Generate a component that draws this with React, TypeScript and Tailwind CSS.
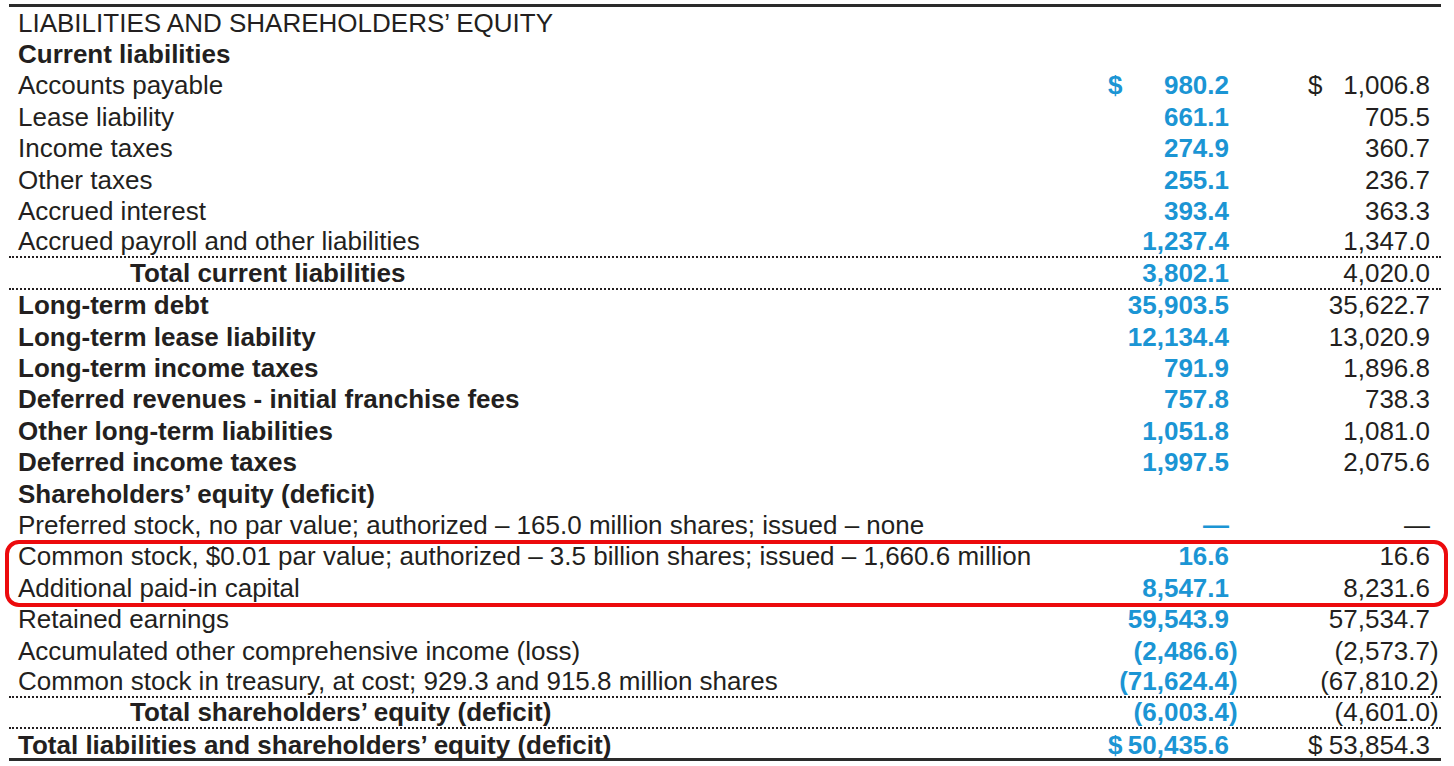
import React from 'react'

type Row = {
  label: string
  cur?: string
  prev?: string
  bold?: boolean
  indent?: boolean
  dollar?: boolean
  dotted?: boolean
}

const rows: Row[] = [
  { label: 'LIABILITIES AND SHAREHOLDERS\u2019 EQUITY' },
  { label: 'Current liabilities', bold: true },
  { label: 'Accounts payable', cur: '980.2', prev: '1,006.8', dollar: true },
  { label: 'Lease liability', cur: '661.1', prev: '705.5' },
  { label: 'Income taxes', cur: '274.9', prev: '360.7' },
  { label: 'Other taxes', cur: '255.1', prev: '236.7' },
  { label: 'Accrued interest', cur: '393.4', prev: '363.3' },
  { label: 'Accrued payroll and other liabilities', cur: '1,237.4', prev: '1,347.0', dotted: true },
  { label: 'Total current liabilities', cur: '3,802.1', prev: '4,020.0', bold: true, indent: true, dotted: true },
  { label: 'Long-term debt', cur: '35,903.5', prev: '35,622.7', bold: true },
  { label: 'Long-term lease liability', cur: '12,134.4', prev: '13,020.9', bold: true },
  { label: 'Long-term income taxes', cur: '791.9', prev: '1,896.8', bold: true },
  { label: 'Deferred revenues - initial franchise fees', cur: '757.8', prev: '738.3', bold: true },
  { label: 'Other long-term liabilities', cur: '1,051.8', prev: '1,081.0', bold: true },
  { label: 'Deferred income taxes', cur: '1,997.5', prev: '2,075.6', bold: true },
  { label: 'Shareholders\u2019 equity (deficit)', bold: true },
  { label: 'Preferred stock, no par value; authorized \u2013 165.0 million shares; issued \u2013 none', cur: '\u2014', prev: '\u2014' },
  { label: 'Common stock, $0.01 par value; authorized \u2013 3.5 billion shares; issued \u2013 1,660.6 million', cur: '16.6', prev: '16.6' },
  { label: 'Additional paid-in capital', cur: '8,547.1', prev: '8,231.6' },
  { label: 'Retained earnings', cur: '59,543.9', prev: '57,534.7' },
  { label: 'Accumulated other comprehensive income (loss)', cur: '(2,486.6)', prev: '(2,573.7)' },
  { label: 'Common stock in treasury, at cost; 929.3 and 915.8 million shares', cur: '(71,624.4)', prev: '(67,810.2)', dotted: true },
  { label: 'Total shareholders\u2019 equity (deficit)', cur: '(6,003.4)', prev: '(4,601.0)', bold: true, indent: true, dotted: true },
  { label: 'Total liabilities and shareholders\u2019 equity (deficit)', cur: '50,435.6', prev: '53,854.3', bold: true, dollar: true },
]

// closing paren hangs past the column edge, like the printed statement
function Amount({ value }: { value: string }) {
  if (value.startsWith('(')) {
    return (
      <span>
        {value.slice(0, -1)}
        <span className="inline-block w-0">)</span>
      </span>
    )
  }
  return <span>{value}</span>
}

export default function App() {
  return (
    <div className="w-[1454px] h-[766px] bg-white relative overflow-hidden text-[#231f20] text-[26px] leading-none"
      style={{ fontFamily: '"Liberation Sans", Arial, sans-serif' }}>
      <div className="ml-[9px] mr-[13px] pt-[4px]">
        <div className="h-[3px] bg-[#2a2a2a]" />
        {rows.map((r, i) => (
          <div key={i}
            className={`flex items-center h-[31.4px] ${r.dotted ? 'border-b-2 border-dotted border-[#231f20]' : ''}`}>
            <div className={`flex-1 whitespace-nowrap ${r.indent ? 'pl-[121px]' : 'pl-[9px]'} ${r.bold ? 'font-bold' : ''}`}>
              {r.label}
            </div>
            <div className="w-[121px] flex justify-between font-bold text-[#1b95d4] whitespace-nowrap">
              <span>{r.dollar ? '$' : ''}</span>
              {r.cur ? <Amount value={r.cur} /> : null}
            </div>
            <div className="w-[79px]" />
            <div className="w-[122px] flex justify-between whitespace-nowrap">
              <span>{r.dollar ? '$' : ''}</span>
              {r.prev ? <Amount value={r.prev} /> : null}
            </div>
            <div className="w-[11px]" />
          </div>
        ))}
        <div className="h-[3px] bg-[#2a2a2a] -mt-[2px]" />
      </div>
      <div className="absolute left-[5px] top-[540px] w-[1443px] h-[67px] border-4 border-[#ec0a0d] rounded-[14px]" />
    </div>
  )
}
